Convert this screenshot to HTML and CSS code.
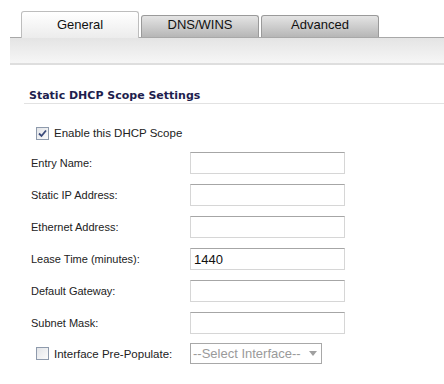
FILE: index.html
```html
<!DOCTYPE html>
<html lang="en">
<head>
    <meta charset="UTF-8">
    <title>DHCP Scope</title>
    <link rel="stylesheet" href="styles.css">
</head>
<body>
    <div class="tabs">
        <div class="tab active">General</div>
        <div class="tab">DNS/WINS</div>
        <div class="tab">Advanced</div>
    </div>
    <div class="toolbar"></div>

    <div class="section">
        <h3 class="section-title"><span>Static DHCP Scope Settings</span></h3>

        <div class="form">
            <div class="row check-row first">
                <span class="check checked">
                    <svg width="9" height="9" viewBox="0 0 9 9"><path d="M1 4.5 L3.5 7 L8 1.5" fill="none" stroke="#3a4a7a" stroke-width="1.8"/></svg>
                </span>
                <span class="check-label">Enable this DHCP Scope</span>
            </div>
            <div class="row">
                <label>Entry Name:</label>
                <input class="field" type="text">
            </div>
            <div class="row">
                <label>Static IP Address:</label>
                <input class="field" type="text">
            </div>
            <div class="row">
                <label>Ethernet Address:</label>
                <input class="field" type="text">
            </div>
            <div class="row">
                <label>Lease Time (minutes):</label>
                <input class="field" type="text" value="1440">
            </div>
            <div class="row">
                <label>Default Gateway:</label>
                <input class="field" type="text">
            </div>
            <div class="row">
                <label>Subnet Mask:</label>
                <input class="field" type="text">
            </div>
            <div class="row check-row last">
                <span class="check"></span>
                <span class="check-label wide">Interface Pre-Populate:</span>
                <div class="select">
                    <span>--Select Interface--</span>
                    <span class="arrow"></span>
                </div>
            </div>
        </div>
    </div>
</body>
</html>
```

FILE: styles.css
```css
body {
    margin: 0;
    background: #fff;
    font-family: "Liberation Sans", Arial, sans-serif;
    color: #222;
}
.tabs {
    display: flex;
    align-items: flex-end;
    gap: 2px;
    height: 37px;
    padding-left: 21px;
    box-sizing: border-box;
}
.tab {
    width: 118px;
    height: 22px;
    box-sizing: border-box;
    border: 1px solid #9a9a9a;
    border-bottom: none;
    border-radius: 3px 3px 0 0;
    background: linear-gradient(#e4e4e4, #b6b6b6);
    font-size: 13px;
    line-height: 17px;
    text-align: center;
    color: #111;
}
.tab.active {
    height: 27px;
    margin-bottom: -1px;
    line-height: 25px;
    border-color: #bdbdbd;
    background: linear-gradient(#ffffff, #ececec);
    position: relative;
}
.toolbar {
    height: 28px;
    margin-left: 10px;
    box-sizing: border-box;
    border-top: 1px solid #a8a8a8;
    border-bottom: 2px solid #dedede;
    background: linear-gradient(#e4e4e4, #f6f6f6);
}
.section {
    padding: 24px 0 0 24px;
}
.section-title {
    margin: 0;
    display: flex;
    padding-left: 5px;
    height: 14px;
    border-bottom: 1px solid #e2e2e2;
    font-family: "DejaVu Sans", Verdana, sans-serif;
    font-size: 11px;
    font-weight: bold;
    line-height: 14px;
    color: #1e1e4e;
}
.form {
    padding-top: 18px;
}
.row {
    display: flex;
    align-items: center;
    height: 22px;
    margin-bottom: 10px;
    padding-left: 7px;
    font-size: 11px;
}
.row.first {
    margin-bottom: 8px;
}
.row.last {
    margin-top: -1px;
    height: 21px;
}
.row label {
    width: 159px;
    color: #222;
}
.field {
    width: 155px;
    height: 22px;
    box-sizing: border-box;
    margin: 0;
    padding: 0 3px;
    border: 1px solid #d6d6d6;
    border-top-color: #a6a6a6;
    font-family: "Liberation Sans", Arial, sans-serif;
    font-size: 13px;
    color: #111;
    outline: none;
}
.check-row {
    padding-left: 12px;
}
.check {
    width: 13px;
    height: 13px;
    box-sizing: border-box;
    border: 1px solid #8e9aac;
    background: linear-gradient(135deg, #e2e4e8, #fbfbfb);
    display: flex;
    align-items: center;
    justify-content: center;
}
.check-label {
    margin-left: 5px;
    font-size: 11.5px;
}
.check-label.wide {
    width: 136px;
}
.select {
    width: 132px;
    height: 21px;
    box-sizing: border-box;
    border: 1px solid #a8a8a8;
    display: flex;
    align-items: center;
    justify-content: space-between;
    padding: 0 4px 0 2px;
    font-size: 13px;
    color: #9a9a9a;
}
.arrow {
    width: 0;
    height: 0;
    border-left: 4px solid transparent;
    border-right: 4px solid transparent;
    border-top: 5px solid #a0a0a0;
}
```
